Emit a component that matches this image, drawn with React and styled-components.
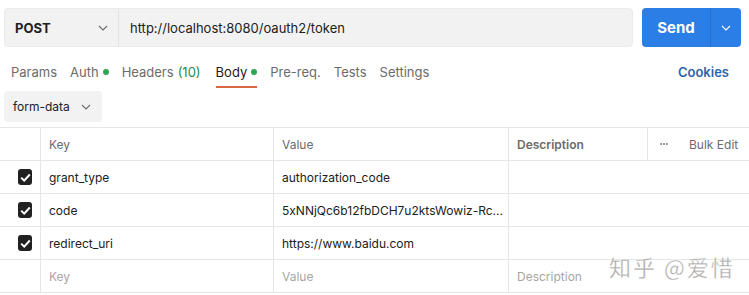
import styled, { createGlobalStyle } from "styled-components";

const GlobalStyle = createGlobalStyle`
  body {
    margin: 0;
    background: #ffffff;
    font-family: Inter, "Noto Sans", "Liberation Sans", sans-serif;
    color: #212121;
  }
`;

const Page = styled.div`
  position: relative;
  width: 749px;
  height: 295px;
  overflow: hidden;
`;

const TopBar = styled.div`
  display: flex;
  align-items: stretch;
  gap: 9px;
  padding: 8px 8px 0 4px;
  height: 39px;
`;

const UrlGroup = styled.div`
  flex: 1;
  display: flex;
  background: #f2f2f2;
  border-radius: 4px;
  border: 1px solid #ebebeb;
  box-sizing: border-box;
`;

const Method = styled.div`
  width: 114px;
  display: flex;
  align-items: center;
  justify-content: space-between;
  padding: 0 10px 0 10px;
  box-sizing: border-box;
  border-right: 1px solid #e3e3e3;
  font-size: 13px;
  font-weight: 700;
  color: #212121;
`;

const Url = styled.div`
  display: flex;
  align-items: center;
  padding-left: 11px;
  font-size: 13px;
  color: #212121;
`;

const SendButton = styled.div`
  display: flex;
  width: 99px;
  background: #2a7ee6;
  border-radius: 4px;
  color: #ffffff;
  overflow: hidden;
`;

const SendLabel = styled.div`
  width: 68px;
  display: flex;
  align-items: center;
  justify-content: center;
  font-size: 15px;
  font-weight: 700;
  border-right: 1px solid #2370d2;
`;

const SendArrow = styled.div`
  flex: 1;
  display: flex;
  align-items: center;
  justify-content: center;
`;

const TabsRow = styled.div`
  display: flex;
  align-items: center;
  justify-content: space-between;
  height: 30px;
  margin-top: 10px;
  padding: 0 20px 0 11px;
`;

const Tabs = styled.div`
  display: flex;
  align-items: stretch;
  gap: 13px;
  height: 100%;
`;

const Tab = styled.div`
  position: relative;
  display: flex;
  align-items: center;
  gap: 4px;
  font-size: 13px;
  color: ${(p) => (p.$active ? "#212121" : "#6b6b6b")};
  margin-left: ${(p) => p.$extra || 0}px;

  &::after {
    content: "";
    display: ${(p) => (p.$active ? "block" : "none")};
    position: absolute;
    left: 0;
    right: 0;
    bottom: -1px;
    height: 2px;
    background: #d8683d;
  }
`;

const Count = styled.span`
  color: #218f4a;
`;

const Dot = styled.span`
  width: 6px;
  height: 6px;
  border-radius: 50%;
  background: #2fa554;
`;

const Cookies = styled.div`
  font-size: 13px;
  font-weight: 600;
  color: #2d64a6;
`;

const BodyBar = styled.div`
  padding: 4px 0 0 4px;
  height: 36px;
`;

const BodyType = styled.div`
  display: inline-flex;
  align-items: center;
  gap: 11px;
  height: 31px;
  width: 98px;
  box-sizing: border-box;
  padding: 0 9px;
  background: #f2f2f2;
  border-radius: 4px;
  font-size: 12px;
  white-space: nowrap;
  color: #212121;
`;

const Table = styled.div`
  display: grid;
  grid-template-columns: 40px 233px 235px 139px 1fr;
  border-top: 1px solid #e6e6e6;
`;

const Cell = styled.div`
  height: 33px;
  box-sizing: border-box;
  display: flex;
  align-items: center;
  padding: 0 8px;
  padding-left: ${(p) => (p.$check ? 18 : p.$pad || 8)}px;
  border-bottom: 1px solid #e6e6e6;
  border-left: ${(p) => (p.$first ? "none" : "1px solid #e6e6e6")};
  grid-column: span ${(p) => p.$span || 1};
  font-size: 12px;
  font-weight: ${(p) => (p.$bold ? 600 : 400)};
  color: ${(p) => (p.$head ? "#6b6b6b" : p.$hint ? "#a6a6a6" : "#212121")};
  white-space: nowrap;
  overflow: hidden;
`;

const Box = styled.span`
  display: flex;
  align-items: center;
  justify-content: center;
  width: 16px;
  height: 16px;
  border-radius: 3px;
  background: #212121;
`;

const Dots = styled.svg`
  margin-right: 21px;
  flex-shrink: 0;
`;

const Watermark = styled.div`
  position: absolute;
  left: 609px;
  top: 250px;
  font-family: "Noto Sans CJK SC", sans-serif;
  font-size: 22px;
  color: #acacac;
  letter-spacing: 2px;
  -webkit-text-stroke: 0.3px #ffffff;
  text-shadow: 0 0 2px #ffffff;
`;

function Chevron({ color = "#6b6b6b" }) {
  return (
    <svg width="10" height="6" viewBox="0 0 10 6" fill="none">
      <path d="M1 1l4 4 4-4" stroke={color} strokeWidth="1.1" />
    </svg>
  );
}

function Check() {
  return (
    <Box>
      <svg width="11" height="9" viewBox="0 0 11 9" fill="none">
        <path d="M1.2 4.6l3 3L9.8 1.5" stroke="#ffffff" strokeWidth="2" />
      </svg>
    </Box>
  );
}

const rows = [
  ["grant_type", "authorization_code"],
  ["code", "5xNNjQc6b12fbDCH7u2ktsWowiz-Rc..."],
  ["redirect_uri", "https://www.baidu.com"],
];

export default function App() {
  return (
    <Page>
      <GlobalStyle />
      <TopBar>
        <UrlGroup>
          <Method>
            POST
            <Chevron />
          </Method>
          <Url>http://localhost:8080/oauth2/token</Url>
        </UrlGroup>
        <SendButton>
          <SendLabel>Send</SendLabel>
          <SendArrow>
            <Chevron color="#ffffff" />
          </SendArrow>
        </SendButton>
      </TopBar>

      <TabsRow>
        <Tabs>
          <Tab>Params</Tab>
          <Tab>
            Auth <Dot />
          </Tab>
          <Tab>
            Headers <Count>(10)</Count>
          </Tab>
          <Tab $active $extra={2}>
            Body <Dot />
          </Tab>
          <Tab>Pre-req.</Tab>
          <Tab>Tests</Tab>
          <Tab>Settings</Tab>
        </Tabs>
        <Cookies>Cookies</Cookies>
      </TabsRow>

      <BodyBar>
        <BodyType>
          form-data
          <Chevron />
        </BodyType>
      </BodyBar>

      <Table>
        <Cell $first />
        <Cell $head>Key</Cell>
        <Cell $head>Value</Cell>
        <Cell $head $bold>Description</Cell>
        <Cell $head $pad={12}>
          <Dots width="8" height="2" viewBox="0 0 8 2">
            <circle cx="1" cy="1" r="1" fill="#7a7a7a" />
            <circle cx="4" cy="1" r="1" fill="#7a7a7a" />
            <circle cx="7" cy="1" r="1" fill="#7a7a7a" />
          </Dots>
          Bulk Edit
        </Cell>
        {rows.map(([k, v]) => (
          <>
            <Cell $first $check>
              <Check />
            </Cell>
            <Cell>{k}</Cell>
            <Cell>{v}</Cell>
            <Cell $span={2} />
          </>
        ))}
        <Cell $first />
        <Cell $hint>Key</Cell>
        <Cell $hint>Value</Cell>
        <Cell $hint $span={2}>
          Description
        </Cell>
      </Table>

      <Watermark>知乎 @爱惜</Watermark>
    </Page>
  );
}
